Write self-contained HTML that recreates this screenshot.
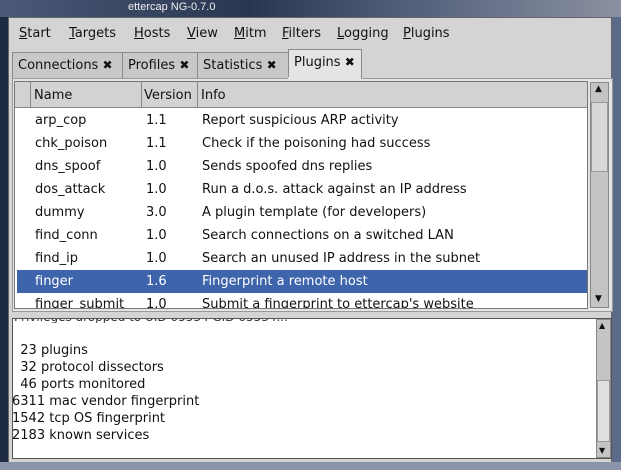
<!DOCTYPE html>
<html><head><style>
*{margin:0;padding:0;box-sizing:border-box}
body{width:621px;height:470px;overflow:hidden;background:#3a4a6a;font-family:"DejaVu Sans","Liberation Sans",sans-serif;font-size:13px;color:#111;position:relative}
.a{position:absolute}
.menu span{position:absolute;white-space:nowrap}
.menu u{text-decoration:underline}
.tab{position:absolute;top:52px;height:26px;background:#c8c8c8;border:1px solid #8a8a8a;border-bottom:none;padding:5px 0 0 5px;white-space:nowrap;overflow:hidden;font-size:13px}
.tab b{font-size:12px}
.row{position:absolute;left:17px;width:570px;height:23px;line-height:23px;white-space:nowrap}
.row span{position:absolute}
.sb{background:#c4c4c4;border:1px solid #888}
</style></head><body>
<div class="a" style="left:0;top:0;width:8px;height:470px;background:#1e2a40"></div>
<div class="a" style="left:612px;top:0;width:9px;height:470px;background:#5a6a88"></div>
<div class="a" style="left:0;top:0;width:621px;height:17px;background:linear-gradient(90deg,#4a5a78,#2a3650 40%,#5a6680 70%,#8a90a0)"></div>
<div class="a" style="left:128px;top:1px;width:100px;color:#eee;font-size:11px;font-family:'Liberation Sans Narrow','Liberation Sans',sans-serif">ettercap NG-0.7.0</div>
<div class="a" style="left:8px;top:17px;width:604px;height:446px;background:#d4d4d4;border:1px solid #666"></div>
<div class="a menu" style="left:0;top:26px;font-size:13px"><span style="left:19px"><u>S</u>tart</span><span style="left:69px"><u>T</u>argets</span><span style="left:134px"><u>H</u>osts</span><span style="left:187px"><u>V</u>iew</span><span style="left:234px"><u>M</u>itm</span><span style="left:282px"><u>F</u>ilters</span><span style="left:337px"><u>L</u>ogging</span><span style="left:403px"><u>P</u>lugins</span></div>
<div class="tab" style="left:12px;width:111px">Connections <b>✖</b></div>
<div class="tab" style="left:122px;width:76px">Profiles <b>✖</b></div>
<div class="tab" style="left:197px;width:92px">Statistics <b>✖</b></div>
<div class="tab" style="left:288px;width:74px;top:49px;height:30px;background:#e4e4e4">Plugins <b>✖</b></div>
<div class="a" style="left:12px;top:78px;width:601px;height:234px;background:#e4e4e4;border:1px solid #999"></div>
<div class="a" style="left:288px;top:77px;width:73px;height:3px;background:#e4e4e4"></div>
<div class="a" style="left:14px;top:81px;width:574px;height:228px;background:#fff;border:1px solid #777"></div>
<div class="a" style="left:15px;top:82px;width:572px;height:26px;background:#d2d2d2;border-bottom:1px solid #888"></div>
<div class="a" style="left:30px;top:82px;width:1px;height:26px;background:#888"></div>
<div class="a" style="left:141px;top:82px;width:1px;height:26px;background:#888"></div>
<div class="a" style="left:197px;top:82px;width:1px;height:26px;background:#888"></div>
<div class="a" style="left:34px;top:88px">Name</div>
<div class="a" style="left:144px;top:88px">Version</div>
<div class="a" style="left:201px;top:88px">Info</div>
<div class="row" style="top:109px"><span style="left:18px">arp_cop</span><span style="left:129px">1.1</span><span style="left:185px">Report suspicious ARP activity</span></div>
<div class="row" style="top:132px"><span style="left:18px">chk_poison</span><span style="left:129px">1.1</span><span style="left:185px">Check if the poisoning had success</span></div>
<div class="row" style="top:155px"><span style="left:18px">dns_spoof</span><span style="left:129px">1.0</span><span style="left:185px">Sends spoofed dns replies</span></div>
<div class="row" style="top:178px"><span style="left:18px">dos_attack</span><span style="left:129px">1.0</span><span style="left:185px">Run a d.o.s. attack against an IP address</span></div>
<div class="row" style="top:201px"><span style="left:18px">dummy</span><span style="left:129px">3.0</span><span style="left:185px">A plugin template (for developers)</span></div>
<div class="row" style="top:224px"><span style="left:18px">find_conn</span><span style="left:129px">1.0</span><span style="left:185px">Search connections on a switched LAN</span></div>
<div class="row" style="top:247px"><span style="left:18px">find_ip</span><span style="left:129px">1.0</span><span style="left:185px">Search an unused IP address in the subnet</span></div>
<div class="row" style="top:270px;background:#3e64ac;color:#fff"><span style="left:18px">finger</span><span style="left:129px">1.6</span><span style="left:185px">Fingerprint a remote host</span></div>
<div class="a" style="left:15px;top:293px;width:572px;height:15px;overflow:hidden"><div class="row" style="top:0;left:2px"><span style="left:18px">finger_submit</span><span style="left:129px">1.0</span><span style="left:185px">Submit a fingerprint to ettercap's website</span></div></div>
<div class="a sb" style="left:590px;top:82px;width:19px;height:226px"></div>
<div class="a" style="left:591px;top:102px;width:17px;height:70px;background:#d8d8d8;border:1px solid #999"></div>
<div class="a" style="left:595px;top:84px;font-size:9px">▲</div>
<div class="a" style="left:595px;top:294px;font-size:9px">▼</div>
<div class="a" style="left:12px;top:318px;width:600px;height:141px;background:#fff;border:1px solid #555"></div>
<div class="a" style="left:14px;top:319px;width:300px;height:4px;overflow:hidden;color:#333;font-size:12px"><div style="margin-top:-9px">Privileges dropped to UID 65534 GID 65534...</div></div>
<div class="a" style="left:12px;top:342px;line-height:17px;white-space:pre"><div>  23 plugins</div><div>  32 protocol dissectors</div><div>  46 ports monitored</div><div>6311 mac vendor fingerprint</div><div>1542 tcp OS fingerprint</div><div>2183 known services</div></div>
<div class="a sb" style="left:596px;top:319px;width:15px;height:139px"></div>
<div class="a" style="left:597px;top:380px;width:13px;height:62px;background:#e0e0e0;border:1px solid #999"></div>
<div class="a" style="left:599px;top:321px;font-size:8px">▲</div>
<div class="a" style="left:599px;top:446px;font-size:8px">▼</div>
<div class="a" style="left:0;top:462px;width:621px;height:8px;background:#8a94a8"></div>
</body></html>
